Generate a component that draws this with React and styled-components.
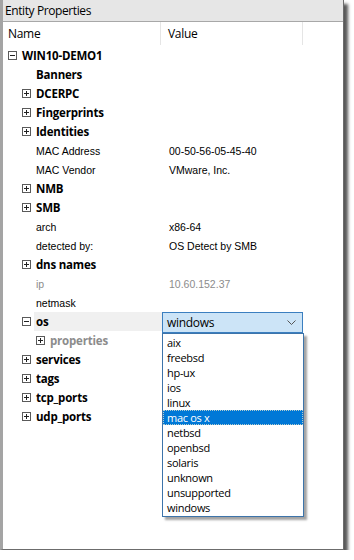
import React from "react";
import styled, { createGlobalStyle } from "styled-components";

const GlobalStyle = createGlobalStyle`
  html, body {
    margin: 0;
    padding: 0;
    background: #ffffff;
  }
  body {
    font-family: "Open Sans", "Liberation Sans", sans-serif;
    color: #000;
  }
`;

const Panel = styled.div`
  position: relative;
  width: 340px;
  height: 549px;
  background: #fff;
  border-left: 3px solid #a4a4a4;
  border-right: 1px solid #6c6c6c;
  border-bottom: 1px solid #6c6c6c;
  box-shadow: 4px 4px 3px rgba(60, 60, 60, 0.85);
  display: flex;
  flex-direction: column;
`;

const TitleBar = styled.div`
  height: 21px;
  background: #e6e6e6;
  border-bottom: 1px solid #a8a8a8;
  display: flex;
  align-items: center;
  padding-left: 2px;
  font-size: 12px;
  letter-spacing: -0.4px;
`;

const HeaderRow = styled.div`
  height: 23px;
  display: grid;
  grid-template-columns: 158px 142px 1fr;
  align-items: stretch;
  font-size: 12px;
  letter-spacing: -0.3px;
`;

const HeaderCell = styled.div`
  display: flex;
  align-items: center;
  padding-left: ${(p) => p.pad || 5}px;
  border-right: ${(p) => (p.last ? "none" : "1px solid #e5e5e5")};
`;

const Tree = styled.div`
  display: flex;
  flex-direction: column;
  padding-top: 1px;
`;

const Row = styled.div`
  height: 19px;
  display: grid;
  grid-template-columns: 159px 141px 1fr;
  align-items: stretch;
`;

const NameCell = styled.div`
  display: flex;
  align-items: center;
  padding-left: ${(p) => 5 + p.level * 14}px;
  gap: 3px;
`;

const Label = styled.div`
  flex: 1;
  align-self: stretch;
  display: flex;
  align-items: center;
  padding-left: 2px;
  background: ${(p) => (p.selected ? "#f0f0f0" : "transparent")};
  color: ${(p) => (p.muted ? "#8c8c8c" : "#000")};
  font-family: ${(p) =>
    p.bold ? '"Open Sans", sans-serif' : '"Liberation Sans", Arial, sans-serif'};
  font-weight: ${(p) => (p.bold ? 700 : 400)};
  font-size: ${(p) => (p.bold ? "11.5px" : "10.5px")};
  letter-spacing: ${(p) => (p.bold ? "-0.2px" : "0")};
  white-space: nowrap;
`;

const Spacer = styled.span`
  width: 9px;
  flex: none;
`;

const ValueCell = styled.div`
  position: relative;
  display: flex;
  align-items: center;
  padding-left: 7px;
  font-family: "Liberation Sans", Arial, sans-serif;
  font-size: 10.5px;
  color: ${(p) => (p.muted ? "#8c8c8c" : "#000")};
  white-space: nowrap;
`;

const Combo = styled.div`
  position: absolute;
  left: 0;
  top: 0;
  width: 141px;
  height: 21px;
  box-sizing: border-box;
  border: 1px solid #3b7fc0;
  background: #cce4f7;
  display: flex;
  align-items: center;
  justify-content: space-between;
  padding: 0 6px 0 4px;
  font-family: "Open Sans", sans-serif;
  font-size: 12px;
  letter-spacing: -0.3px;
  color: #000;
`;

const DropList = styled.ul`
  position: absolute;
  left: -1px;
  top: 20px;
  width: 142px;
  box-sizing: border-box;
  margin: 0;
  padding: 1px 0 1px;
  list-style: none;
  background: #fff;
  border: 1px solid #3d74aa;
  box-shadow: 3px 3px 2px rgba(90, 90, 90, 0.55);
  z-index: 2;
`;

const Option = styled.li`
  height: 15px;
  box-sizing: border-box;
  display: flex;
  align-items: center;
  padding-left: 3px;
  font-family: "Open Sans", sans-serif;
  font-size: 11px;
  line-height: 13px;
  color: ${(p) => (p.active ? "#fff" : "#000")};
  background: ${(p) => (p.active ? "#0078d7" : "transparent")};
  border: 1px dotted ${(p) => (p.active ? "rgba(255,240,200,0.7)" : "transparent")};
`;

const Expander = ({ open }) => (
  <svg width="9" height="9" viewBox="0 0 9 9" style={{ flex: "none" }}>
    <rect x="0.5" y="0.5" width="8" height="8" fill="#fff" stroke="#5a5a5a" />
    <line x1="2" y1="4.5" x2="7" y2="4.5" stroke="#222" />
    {!open && <line x1="4.5" y1="2" x2="4.5" y2="7" stroke="#222" />}
  </svg>
);

const Chevron = () => (
  <svg width="9" height="5" viewBox="0 0 9 5">
    <path d="M0.5 0.5 L4.5 4.5 L8.5 0.5" fill="none" stroke="#555" />
  </svg>
);

const rows = [
  { label: "WIN10-DEMO1", level: 0, exp: "open", bold: true },
  { label: "Banners", level: 1, bold: true },
  { label: "DCERPC", level: 1, exp: "closed", bold: true },
  { label: "Fingerprints", level: 1, exp: "closed", bold: true },
  { label: "Identities", level: 1, exp: "closed", bold: true },
  { label: "MAC Address", level: 1, value: "00-50-56-05-45-40" },
  { label: "MAC Vendor", level: 1, value: "VMware, Inc." },
  { label: "NMB", level: 1, exp: "closed", bold: true },
  { label: "SMB", level: 1, exp: "closed", bold: true },
  { label: "arch", level: 1, value: "x86-64" },
  { label: "detected by:", level: 1, value: "OS Detect by SMB" },
  { label: "dns names", level: 1, exp: "closed", bold: true },
  { label: "ip", level: 1, value: "10.60.152.37", muted: true },
  { label: "netmask", level: 1 },
  { label: "os", level: 1, exp: "open", bold: true, selected: true, combo: true },
  { label: "properties", level: 2, exp: "closed", bold: true, muted: true },
  { label: "services", level: 1, exp: "closed", bold: true },
  { label: "tags", level: 1, exp: "closed", bold: true },
  { label: "tcp_ports", level: 1, exp: "closed", bold: true },
  { label: "udp_ports", level: 1, exp: "closed", bold: true },
];

const osList = [
  "aix",
  "freebsd",
  "hp-ux",
  "ios",
  "linux",
  "mac os x",
  "netbsd",
  "openbsd",
  "solaris",
  "unknown",
  "unsupported",
  "windows",
];

export default function App() {
  return (
    <>
      <GlobalStyle />
      <Panel>
        <TitleBar>Entity Properties</TitleBar>
        <HeaderRow>
          <HeaderCell>Name</HeaderCell>
          <HeaderCell pad={7}>Value</HeaderCell>
          <HeaderCell last />
        </HeaderRow>
        <Tree>
          {rows.map((r) => (
            <Row key={r.label}>
              <NameCell level={r.level}>
                {r.exp ? <Expander open={r.exp === "open"} /> : <Spacer />}
                <Label bold={r.bold} muted={r.muted} selected={r.selected}>
                  {r.label}
                </Label>
              </NameCell>
              <ValueCell muted={r.muted}>
                {r.value}
                {r.combo && (
                  <Combo>
                    <span>windows</span>
                    <Chevron />
                    <DropList>
                      {osList.map((o) => (
                        <Option key={o} active={o === "mac os x"}>
                          {o}
                        </Option>
                      ))}
                    </DropList>
                  </Combo>
                )}
              </ValueCell>
              <div />
            </Row>
          ))}
        </Tree>
      </Panel>
    </>
  );
}
